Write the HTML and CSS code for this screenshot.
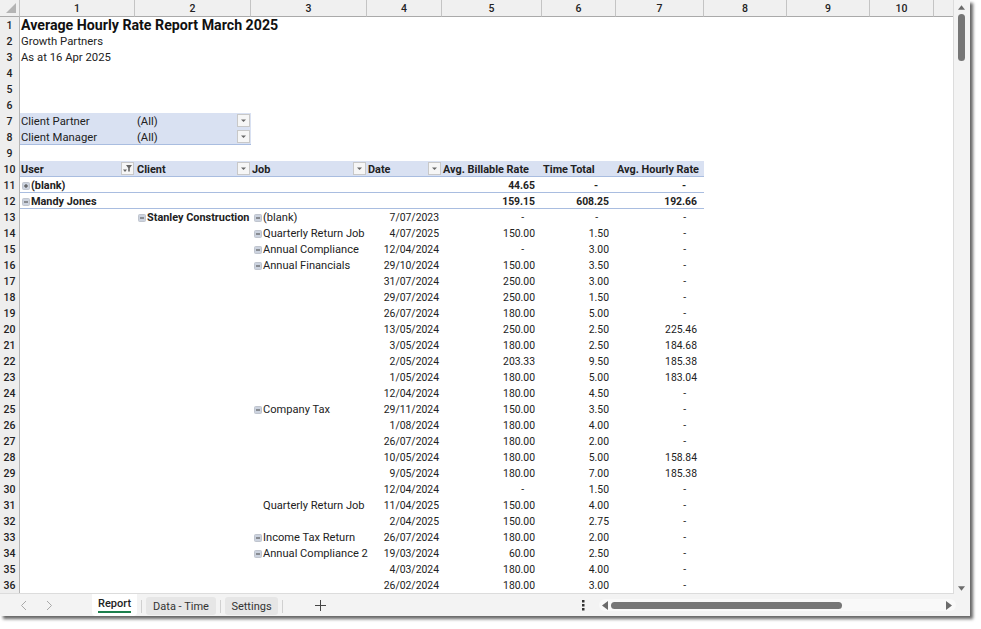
FILE: index.html
```html
<!DOCTYPE html>
<html lang="en">
<head>
<meta charset="utf-8">
<title>Average Hourly Rate Report March 2025</title>
<link rel="stylesheet" href="styles.css">
</head>
<body>
<div class="window">
  <div class="main">
    <div class="sheet">
      <table class="grid">
        <colgroup>
          <col class="c0"><col class="c1"><col class="c2"><col class="c3"><col class="c4"><col class="c5"><col class="c6"><col class="c7"><col class="c8"><col class="c9"><col class="c10"><col class="c11">
        </colgroup>
        <thead>
          <tr>
            <th class="corner"><svg class="corner-mark" viewBox="0 0 10 10"><path d="M10 0V10H0Z"/></svg></th>
            <th>1</th><th>2</th><th>3</th><th>4</th><th>5</th><th>6</th><th>7</th><th>8</th><th>9</th><th>10</th><th></th>
          </tr>
        </thead>
        <tbody>
          <tr><th>1</th><td colspan="3" class="title">Average Hourly Rate Report March 2025</td></tr>
          <tr><th>2</th><td colspan="3">Growth Partners</td></tr>
          <tr><th>3</th><td colspan="3">As at 16 Apr 2025</td></tr>
          <tr><th>4</th></tr>
          <tr><th>5</th></tr>
          <tr><th>6</th></tr>
          <tr class="slicer"><th>7</th><td>Client Partner</td><td><span class="fld">(All)<svg class="drop" viewBox="0 0 13 13"><rect x=".5" y=".5" width="12" height="12"/><path d="M4 5.5h5L6.5 8z"/></svg></span></td></tr>
          <tr class="slicer slicer-end"><th>8</th><td>Client Manager</td><td><span class="fld">(All)<svg class="drop" viewBox="0 0 13 13"><rect x=".5" y=".5" width="12" height="12"/><path d="M4 5.5h5L6.5 8z"/></svg></span></td></tr>
          <tr><th>9</th></tr>
          <tr class="head">
            <th>10</th>
            <td><span class="fld">User<svg class="drop" viewBox="0 0 13 13"><rect x=".5" y=".5" width="12" height="12"/><path d="M5 3h6L8.800 6v3.500H7.200V6zM2 7.500h4L4 10z"/></svg></span></td>
            <td><span class="fld">Client<svg class="drop" viewBox="0 0 13 13"><rect x=".5" y=".5" width="12" height="12"/><path d="M4 5.5h5L6.5 8z"/></svg></span></td>
            <td><span class="fld">Job<svg class="drop" viewBox="0 0 13 13"><rect x=".5" y=".5" width="12" height="12"/><path d="M4 5.5h5L6.5 8z"/></svg></span></td>
            <td><span class="fld">Date<svg class="drop" viewBox="0 0 13 13"><rect x=".5" y=".5" width="12" height="12"/><path d="M4 5.5h5L6.5 8z"/></svg></span></td>
            <td>Avg. Billable Rate</td><td>Time Total</td><td>Avg. Hourly Rate</td>
          </tr>
          <tr class="total"><th>11</th><td colspan="4"><svg class="tog" viewBox="0 0 8 8"><rect x=".5" y=".5" width="7" height="7" rx="1"/><path d="M2 4h4M4 2v4"/></svg>(blank)</td><td class="n">44.65</td><td class="d">-</td><td class="d">-</td></tr>
          <tr class="total"><th>12</th><td colspan="4"><svg class="tog" viewBox="0 0 8 8"><rect x=".5" y=".5" width="7" height="7" rx="1"/><path d="M2 4h4"/></svg>Mandy Jones</td><td class="n">159.15</td><td class="n">608.25</td><td class="n">192.66</td></tr>
          <tr><th>13</th><td></td><td class="client"><svg class="tog" viewBox="0 0 8 8"><rect x=".5" y=".5" width="7" height="7" rx="1"/><path d="M2 4h4"/></svg>Stanley Construction</td><td class="job"><svg class="tog" viewBox="0 0 8 8"><rect x=".5" y=".5" width="7" height="7" rx="1"/><path d="M2 4h4"/></svg>(blank)</td><td class="date">7/07/2023</td><td class="d">-</td><td class="d">-</td><td class="d">-</td></tr>
          <tr><th>14</th><td></td><td></td><td class="job"><svg class="tog" viewBox="0 0 8 8"><rect x=".5" y=".5" width="7" height="7" rx="1"/><path d="M2 4h4"/></svg>Quarterly Return Job</td><td class="date">4/07/2025</td><td class="n">150.00</td><td class="n">1.50</td><td class="d">-</td></tr>
          <tr><th>15</th><td></td><td></td><td class="job"><svg class="tog" viewBox="0 0 8 8"><rect x=".5" y=".5" width="7" height="7" rx="1"/><path d="M2 4h4"/></svg>Annual Compliance</td><td class="date">12/04/2024</td><td class="d">-</td><td class="n">3.00</td><td class="d">-</td></tr>
          <tr><th>16</th><td></td><td></td><td class="job"><svg class="tog" viewBox="0 0 8 8"><rect x=".5" y=".5" width="7" height="7" rx="1"/><path d="M2 4h4"/></svg>Annual Financials</td><td class="date">29/10/2024</td><td class="n">150.00</td><td class="n">3.50</td><td class="d">-</td></tr>
          <tr><th>17</th><td></td><td></td><td></td><td class="date">31/07/2024</td><td class="n">250.00</td><td class="n">3.00</td><td class="d">-</td></tr>
          <tr><th>18</th><td></td><td></td><td></td><td class="date">29/07/2024</td><td class="n">250.00</td><td class="n">1.50</td><td class="d">-</td></tr>
          <tr><th>19</th><td></td><td></td><td></td><td class="date">26/07/2024</td><td class="n">180.00</td><td class="n">5.00</td><td class="d">-</td></tr>
          <tr><th>20</th><td></td><td></td><td></td><td class="date">13/05/2024</td><td class="n">250.00</td><td class="n">2.50</td><td class="n">225.46</td></tr>
          <tr><th>21</th><td></td><td></td><td></td><td class="date">3/05/2024</td><td class="n">180.00</td><td class="n">2.50</td><td class="n">184.68</td></tr>
          <tr><th>22</th><td></td><td></td><td></td><td class="date">2/05/2024</td><td class="n">203.33</td><td class="n">9.50</td><td class="n">185.38</td></tr>
          <tr><th>23</th><td></td><td></td><td></td><td class="date">1/05/2024</td><td class="n">180.00</td><td class="n">5.00</td><td class="n">183.04</td></tr>
          <tr><th>24</th><td></td><td></td><td></td><td class="date">12/04/2024</td><td class="n">180.00</td><td class="n">4.50</td><td class="d">-</td></tr>
          <tr><th>25</th><td></td><td></td><td class="job"><svg class="tog" viewBox="0 0 8 8"><rect x=".5" y=".5" width="7" height="7" rx="1"/><path d="M2 4h4"/></svg>Company Tax</td><td class="date">29/11/2024</td><td class="n">150.00</td><td class="n">3.50</td><td class="d">-</td></tr>
          <tr><th>26</th><td></td><td></td><td></td><td class="date">1/08/2024</td><td class="n">180.00</td><td class="n">4.00</td><td class="d">-</td></tr>
          <tr><th>27</th><td></td><td></td><td></td><td class="date">26/07/2024</td><td class="n">180.00</td><td class="n">2.00</td><td class="d">-</td></tr>
          <tr><th>28</th><td></td><td></td><td></td><td class="date">10/05/2024</td><td class="n">180.00</td><td class="n">5.00</td><td class="n">158.84</td></tr>
          <tr><th>29</th><td></td><td></td><td></td><td class="date">9/05/2024</td><td class="n">180.00</td><td class="n">7.00</td><td class="n">185.38</td></tr>
          <tr><th>30</th><td></td><td></td><td></td><td class="date">12/04/2024</td><td class="d">-</td><td class="n">1.50</td><td class="d">-</td></tr>
          <tr><th>31</th><td></td><td></td><td class="job plain">Quarterly Return Job</td><td class="date">11/04/2025</td><td class="n">150.00</td><td class="n">4.00</td><td class="d">-</td></tr>
          <tr><th>32</th><td></td><td></td><td></td><td class="date">2/04/2025</td><td class="n">150.00</td><td class="n">2.75</td><td class="d">-</td></tr>
          <tr><th>33</th><td></td><td></td><td class="job"><svg class="tog" viewBox="0 0 8 8"><rect x=".5" y=".5" width="7" height="7" rx="1"/><path d="M2 4h4"/></svg>Income Tax Return</td><td class="date">26/07/2024</td><td class="n">180.00</td><td class="n">2.00</td><td class="d">-</td></tr>
          <tr><th>34</th><td></td><td></td><td class="job"><svg class="tog" viewBox="0 0 8 8"><rect x=".5" y=".5" width="7" height="7" rx="1"/><path d="M2 4h4"/></svg>Annual Compliance 2</td><td class="date">19/03/2024</td><td class="n">60.00</td><td class="n">2.50</td><td class="d">-</td></tr>
          <tr><th>35</th><td></td><td></td><td></td><td class="date">4/03/2024</td><td class="n">180.00</td><td class="n">4.00</td><td class="d">-</td></tr>
          <tr><th>36</th><td></td><td></td><td></td><td class="date">26/02/2024</td><td class="n">180.00</td><td class="n">3.00</td><td class="d">-</td></tr>
        </tbody>
      </table>
    </div>
    <div class="vscroll">
      <svg class="arrow" viewBox="0 0 9 6"><path d="M4.5 0L9 6H0z"/></svg>
      <div class="vtrack"><div class="vthumb"></div></div>
      <svg class="arrow" viewBox="0 0 9 6"><path d="M0 0H9L4.5 6z"/></svg>
    </div>
  </div>
  <div class="bottom">
    <div class="nav">
      <svg class="chev" viewBox="0 0 7 11"><path d="M6 1L1.500 5.500L6 10"/></svg>
      <svg class="chev" viewBox="0 0 7 11"><path d="M1 1L5.500 5.500L1 10"/></svg>
    </div>
    <div class="tabs">
      <div class="tab active"><span class="tab-label">Report</span></div>
      <span class="sep"></span>
      <div class="tab data">Data - Time</div>
      <span class="sep"></span>
      <div class="tab settings">Settings</div>
      <span class="sep"></span>
      <svg class="plus" viewBox="0 0 11 11"><path d="M5.500 0V11M0 5.500H11"/></svg>
    </div>
    <svg class="dots" viewBox="0 0 3 11"><path d="M0 0h2.500v2.500H0zM0 4h2.500v2.500H0zM0 8h2.500v2.500H0z"/></svg>
    <div class="hscroll">
      <svg class="harrow" viewBox="0 0 6 9"><path d="M6 0V9L0 4.500z"/></svg>
      <div class="htrack"><div class="hthumb"></div></div>
      <svg class="harrow" viewBox="0 0 6 9"><path d="M0 0V9L6 4.500z"/></svg>
    </div>
  </div>
</div>
</body>
</html>
```
FILE: styles.css
```css
* { box-sizing: border-box; }
html, body { margin: 0; height: 100%; background: #fff; overflow: hidden; }
body { font-family: Roboto, "Noto Sans", sans-serif; color: #222; font-size: 11.3px; }

.window {
  width: 970px;
  height: 616px;
  display: flex;
  flex-direction: column;
  background: #f3f3f3;
  box-shadow: 3px 3px 3px #666;
}
.main { display: flex; height: 594px; }
.sheet { width: 954px; background: #fff; overflow: hidden; border-bottom: 1px solid #dcdcdc; border-right: 1px solid #dcdcdc; }

.grid { table-layout: fixed; width: 953px; border-collapse: separate; border-spacing: 0; }
.c0 { width: 20px; } .c1 { width: 115px; } .c2 { width: 116px; } .c3 { width: 116px; }
.c4 { width: 75px; } .c5 { width: 100px; } .c6 { width: 74px; } .c7 { width: 88px; }
.c8 { width: 83px; } .c9 { width: 83px; } .c10 { width: 64px; } .c11 { width: 19px; }

.grid tr { height: 16px; }
.grid th, .grid td { padding: 0; height: 16px; line-height: 15px; white-space: nowrap; }
.grid thead th {
  height: 17px;
  background: #f0f0f0;
  border-bottom: 1px solid #aaa;
  border-right: 1px solid #c4c4c4;
  font-size: 10.5px;
  font-weight: 500;
  text-align: center;
  color: #222;
}
.grid thead th:last-child { border-right: 0; }
.grid tbody th {
  background: #eee;
  border-right: 1px solid #b5b5b5;
  font-size: 10.5px;
  font-weight: 500;
  text-align: center;
  color: #222;
}
.corner { position: relative; }
.corner-mark { position: absolute; right: 3px; bottom: 3px; width: 10px; height: 10px; fill: #b4b4b4; }

.grid td { padding-left: 1px; }
.grid td.title { font-size: 14.2px; font-weight: 700; color: #111; }

.slicer td { background: #d9e1f2; }
.grid .slicer-end td { border-bottom: 1px solid #a9bde0; line-height: 13px; padding-top: 2px; }
.grid .head td { background: #d9e1f2; font-size: 10.9px; font-weight: 700; border-bottom: 1px solid #a9bde0; line-height: 13px; padding-top: 2px; }
.grid .slicer td:nth-child(3), .grid .head td:nth-child(3) { padding-left: 2px; }
.grid .total td { font-size: 10.9px; font-weight: 700; border-bottom: 1px solid #a9bde0; line-height: 13px; padding-top: 2px; }

.fld { display: flex; align-items: center; justify-content: space-between; padding-right: 1px; height: 13px; }
.drop { width: 13px; height: 13px; flex: none; margin-top: -1px; }
.slicer-end .drop, .head .drop { margin-top: -3px; }
.drop rect { fill: #f6f6f6; stroke: #c8c8c8; }
.drop path { fill: #666; }

.tog { width: 8px; height: 8px; margin-right: 1px; vertical-align: -1px; }
.tog rect { fill: #ccd3df; stroke: #c0c5ce; }
.tog path { stroke: #444; stroke-width: 1; fill: none; }

.grid .total td:nth-child(2) { padding-left: 2px; }
.grid td.client { font-size: 10.9px; font-weight: 700; padding-left: 3px; }
.grid td.job { padding-left: 3px; font-size: 11.1px; }
.grid td.job.plain { padding-left: 12px; }
.grid td.date { text-align: right; font-size: 10.4px; padding: 0 3px 0 0; }
.grid td.n { text-align: right; font-size: 10.4px; padding: 0 7px 0 0; }
.grid td.d { text-align: right; font-size: 10.4px; padding: 0 18px 0 0; }
.grid .total td.n { padding: 2px 7px 0 0; }
.grid .total td.d { padding: 2px 18px 0 0; }

.vscroll { width: 16px; display: flex; flex-direction: column; align-items: center; padding: 5px 1px 3px 0; }
.arrow { width: 7px; height: 5px; fill: #6b6b6b; flex: none; }
.vtrack { flex: 1; width: 100%; padding-top: 4px; display: flex; justify-content: center; }
.vthumb { width: 7px; height: 47px; background: #767676; border-radius: 4px; }

.bottom { flex: 1; display: flex; align-items: center; position: relative; }
.nav { width: 92px; display: flex; padding-left: 20px; gap: 19px; }
.chev { width: 7px; height: 11px; fill: none; stroke: #a8a8a8; stroke-width: 1; }
.tabs { width: 476px; display: flex; align-items: center; height: 100%; color: #333; font-size: 11px; }
.tab { height: 18px; width: 70px; margin-top: 2px; background: #e6e6e6; border-radius: 3px; display: flex; align-items: center; justify-content: center; }
.tab.settings { width: 53px; }
.tab.active { width: 45px; height: 100%; margin-top: 0; background: #fff; color: #222; font-weight: 500; justify-content: flex-start; padding: 0 0 1px 6px; border-radius: 0 0 4px 4px; }
.tab-label { border-bottom: 2px solid #1d7f4d; line-height: 15px; }
.sep { width: 1px; height: 13px; margin: 2px 4px 0; background: #d0d0d0; }
.plus { width: 11px; height: 11px; stroke: #444; stroke-width: 1; margin-left: 28px; }
.dots { width: 3px; height: 11px; fill: #333; margin-left: 14px; }
.hscroll { margin-left: 14px; width: 357px; height: 12px; background: #f9f9f9; border-radius: 6px; display: flex; align-items: center; padding: 0 4px 0 3px; }
.harrow { width: 6px; height: 9px; fill: #6b6b6b; flex: none; }
.htrack { flex: 1; padding-left: 3px; }
.hthumb { width: 231px; height: 7px; background: #767676; border-radius: 4px; }
```
